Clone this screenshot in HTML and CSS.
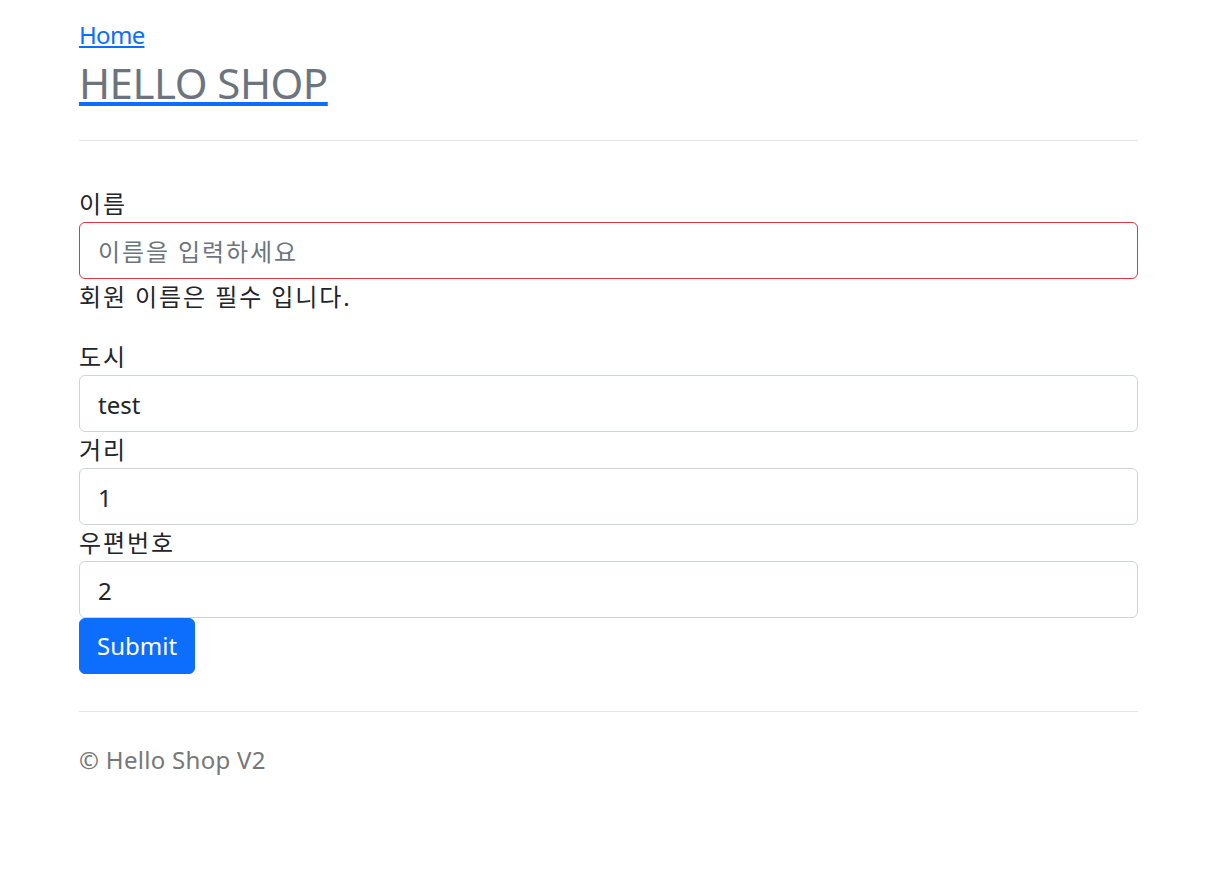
FILE: index.html
```html
<!DOCTYPE html>
<html lang="ko">
<head>
<meta charset="utf-8">
<title>Hello Shop</title>
<link rel="stylesheet" href="styles.css">
</head>
<body>
<div class="container">
  <div class="header">
    <ul class="nav">
      <li><a href="#">Home</a></li>
    </ul>
    <a href="#" class="brand"><h3 class="brand-title">HELLO SHOP</h3></a>
  </div>

  <form class="member-form">
    <div class="form-group first">
      <label class="form-label" for="name">이름</label>
      <input id="name" class="form-control invalid" type="text" placeholder="이름을 입력하세요">
      <p class="field-error">회원 이름은 필수 입니다.</p>
    </div>
    <div class="form-group">
      <label class="form-label" for="city">도시</label>
      <input id="city" class="form-control" type="text" value="test">
    </div>
    <div class="form-group">
      <label class="form-label" for="street">거리</label>
      <input id="street" class="form-control" type="text" value="1">
    </div>
    <div class="form-group">
      <label class="form-label" for="zipcode">우편번호</label>
      <input id="zipcode" class="form-control" type="text" value="2">
    </div>
    <button type="submit" class="btn-primary">Submit</button>
  </form>

  <div class="footer">
    <p class="footer-text">© Hello Shop V2</p>
  </div>
</div>
</body>
</html>
```

FILE: styles.css
```css
* {
  box-sizing: border-box;
}

html, body {
  margin: 0;
  padding: 0;
  background: #ffffff;
}

body {
  font-family: "Noto Sans", "Noto Sans CJK KR", sans-serif;
  font-size: 24px;
  line-height: 36px;
  color: #212529;
}

.container {
  width: 1059px;
  margin-left: 79px;
}

.header {
  padding-top: 17px;
  padding-bottom: 27px;
  border-bottom: 1px solid #e5e5e5;
  margin-bottom: 45px;
}

.nav {
  list-style: none;
  margin: 0;
  padding: 0;
  display: flex;
}

.nav a {
  color: #0d6efd;
  text-decoration: underline;
  letter-spacing: -0.7px;
}

.brand {
  color: #0d6efd;
  text-decoration: underline;
  display: inline-block;
}

.brand-title {
  margin: 0;
  font-size: 42px;
  line-height: 60px;
  font-weight: 400;
  color: #6c757d;
  letter-spacing: -0.5px;
}

.member-form {
  margin: 0 0 37px;
}

.form-group {
  display: flex;
  flex-direction: column;
}

.form-group.first {
  margin-bottom: 24px;
}

.form-label {
  display: block;
  letter-spacing: 1.9px;
}

.form-control {
  display: block;
  width: 100%;
  height: 57px;
  padding: 10px 18px 9px;
  font-family: inherit;
  font-size: 24px;
  line-height: 36px;
  color: #212529;
  background: #ffffff;
  border: 1px solid #ced4da;
  border-radius: 6px;
  outline: none;
}

.form-control::placeholder {
  color: #6c757d;
  letter-spacing: 1.9px;
}

.form-control.invalid {
  border-color: #dc3545;
}

.field-error {
  margin: 0;
  letter-spacing: 1.9px;
}

.btn-primary {
  display: inline-block;
  align-self: flex-start;
  height: 56px;
  padding: 9px 17px;
  font-family: inherit;
  font-size: 24px;
  line-height: 36px;
  color: #ffffff;
  background: #0d6efd;
  border: 1px solid #0d6efd;
  border-radius: 6px;
}

.footer {
  border-top: 1px solid #e5e5e5;
  padding-top: 30px;
  color: #777777;
}

.footer-text {
  margin: 0;
  letter-spacing: 0.3px;
}
```
